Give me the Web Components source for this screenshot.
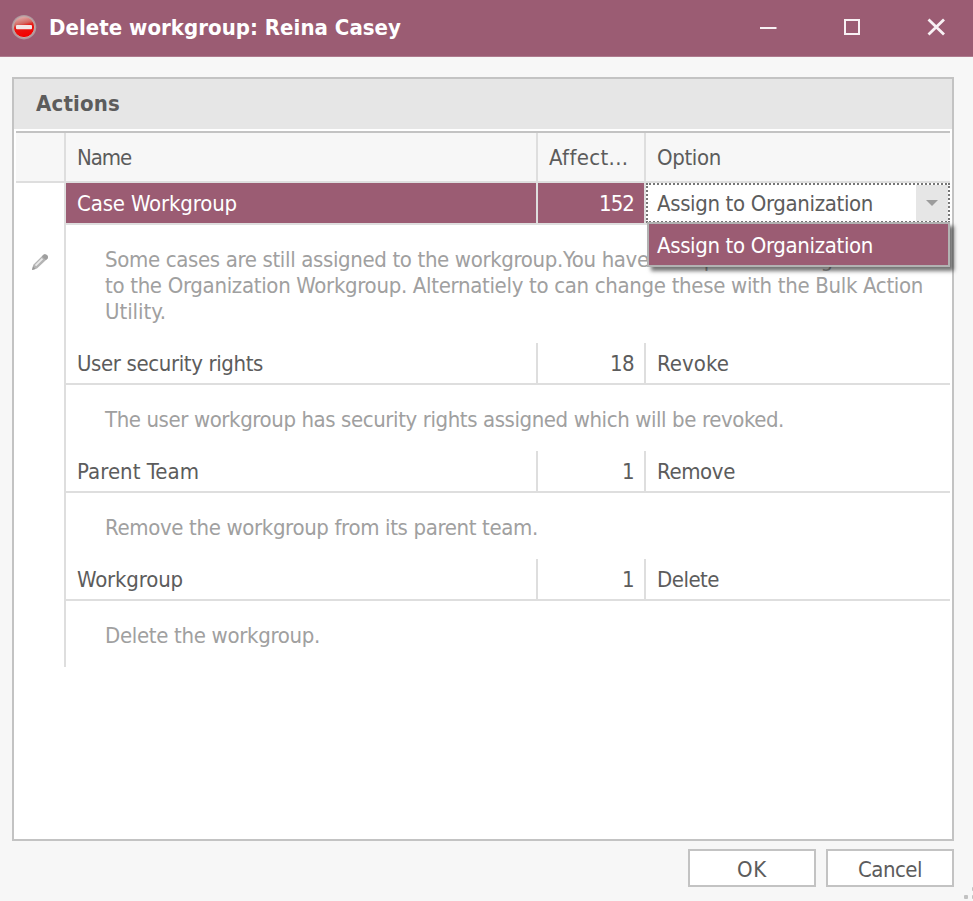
<!DOCTYPE html>
<html lang="en">
<head>
<meta charset="utf-8">
<title>Delete workgroup</title>
<style>
html, body { margin: 0; height: 100%; overflow: hidden; }
body { font: 22px/26px "DejaVu Sans Condensed", "DejaVu Sans", sans-serif; font-stretch: condensed; color: #5c5c5c; background: #f7f7f7; }
</style>
</head>
<body>
<dialog-window>
  <title-bar slot="title"><fit-text w="352">Delete workgroup: Reina Casey</fit-text></title-bar>
  <actions-panel>
    <fit-text slot="caption" w="84">Actions</fit-text>
    <grid-row head>
      <fit-text slot="name" w="54">Name</fit-text>
      <fit-text slot="count" w="80">Affect...</fit-text>
      <fit-text slot="option" w="64">Option</fit-text>
    </grid-row>
    <grid-row selected>
      <fit-text slot="name" w="160">Case Workgroup</fit-text>
      <fit-text slot="count" w="35">152</fit-text>
      <option-editor slot="option">
        <fit-text w="216">Assign to Organization</fit-text>
        <fit-text slot="item" w="216">Assign to Organization</fit-text>
      </option-editor>
    </grid-row>
    <row-note editing>
      <fit-text w="799">Some cases are still assigned to the workgroup.You have the option to assign these</fit-text>
      <fit-text w="818">to the Organization Workgroup. Alternatiely to can change these with the Bulk Action</fit-text>
      <fit-text w="61">Utility.</fit-text>
    </row-note>
    <grid-row>
      <fit-text slot="name" w="186">User security rights</fit-text>
      <fit-text slot="count" w="24">18</fit-text>
      <fit-text slot="option" w="72">Revoke</fit-text>
    </grid-row>
    <row-note><fit-text w="679">The user workgroup has security rights assigned which will be revoked.</fit-text></row-note>
    <grid-row>
      <fit-text slot="name" w="122">Parent Team</fit-text>
      <fit-text slot="count" w="12">1</fit-text>
      <fit-text slot="option" w="78">Remove</fit-text>
    </grid-row>
    <row-note><fit-text w="433">Remove the workgroup from its parent team.</fit-text></row-note>
    <grid-row>
      <fit-text slot="name" w="106">Workgroup</fit-text>
      <fit-text slot="count" w="12">1</fit-text>
      <fit-text slot="option" w="62">Delete</fit-text>
    </grid-row>
    <row-note><fit-text w="215">Delete the workgroup.</fit-text></row-note>
  </actions-panel>
  <push-button slot="footer"><fit-text w="30">OK</fit-text></push-button>
  <push-button slot="footer"><fit-text w="64">Cancel</fit-text></push-button>
</dialog-window>
<script>
function element(name, html, ready) {
  const template = document.createElement('template');
  template.innerHTML = html;
  customElements.define(name, class extends HTMLElement {
    constructor() {
      super();
      this.attachShadow({ mode: 'open' }).append(template.content.cloneNode(true));
    }
    connectedCallback() { if (ready) ready(this); }
  });
}

element('dialog-window', `
<style>
:host { display: flex; flex-direction: column; width: 973px; height: 901px; position: relative; overflow: hidden; background: #f7f7f7; }
main { padding: 20px 19px 0 12px; height: 764px; flex: none; display: flex; }
main ::slotted(*) { flex: 1; }
footer { display: flex; justify-content: flex-end; gap: 10px; padding: 8px 19px 0 0; }
svg { position: absolute; right: 0; bottom: 0; }
</style>
<slot name="title"></slot>
<main><slot></slot></main>
<footer><slot name="footer"></slot></footer>
<svg width="12" height="16" fill="#c2c2c2"><rect x="3" y="10" width="4" height="4" rx="1"/><rect x="11" y="10" width="4" height="4" rx="1"/><rect x="11" y="2" width="4" height="4" rx="1"/></svg>`);

element('title-bar', `
<style>
:host { display: flex; box-sizing: border-box; height: 57px; flex: none; background: #9b5c73; border-bottom: 1px solid #ae7b8e; color: #fff; font-weight: bold; align-items: center; padding-left: 11px; }
.stop { flex: none; margin-right: 12px; }
.label { flex: 1; padding-bottom: 1px; }
.ctl { flex: none; }
</style>
<svg class="stop" width="26" height="28" viewBox="0 0 26 28">
  <defs><linearGradient id="g" x1="0" y1="0" x2="0.25" y2="1"><stop offset="0" stop-color="#e6c4c4"/><stop offset=".42" stop-color="#d4655f"/><stop offset=".55" stop-color="#e51a14"/><stop offset="1" stop-color="#f40000"/></linearGradient></defs>
  <circle cx="13" cy="13.200" r="12.200" fill="#b09a9f"/>
  <circle cx="13" cy="13" r="10.600" fill="url(#g)" stroke="#c4a6a6" stroke-width="1"/>
  <rect x="5" y="11" width="16" height="4.200" rx="1" fill="#f4e6e6"/>
</svg>
<div class="label"><slot></slot></div>
<svg class="ctl" width="216" height="56" fill="none" stroke="#f8f1f4" stroke-width="2">
  <path d="M3 28H19.500"/><rect x="88" y="20" width="14" height="14"/><path stroke-width="2.800" d="M171.500 19.500L187 34.500M187 19.500L171.500 34.500"/>
</svg>`);

element('actions-panel', `
<style>
:host { display: flex; flex-direction: column; box-sizing: border-box; border: 2px solid #c3c3c3; background: #fff; }
.caption { height: 50px; box-sizing: border-box; flex: none; padding: 12px 0 0 22px; background: #e6e6e6; font-weight: bold; color: #5c5c5c; }
.grid { margin: 2px 2px 0 2px; border-top: 2px solid #c3c3c3; flex: 1; }
</style>
<div class="caption"><slot name="caption"></slot></div>
<div class="grid"><slot></slot></div>`);

element('grid-row', `
<style>
:host { display: grid; grid-template-columns: 48px 472px 108px 306px; height: 42px; }
:host([head]) { height: 50px; background: #f7f7f7; }
div { box-sizing: border-box; border-left: 2px solid #dedede; border-bottom: 2px solid #dedede; padding: 8px 11px 0; white-space: nowrap; min-width: 0; }
.mark { border-left: 0; border-bottom: 0; }
.count { text-align: right; padding-right: 10px; }
:host([head]) div { padding-top: 12px; }
:host([head]) .mark { border-bottom: 2px solid #dedede; }
:host([head]) .count { text-align: left; }
:host([selected]) .name, :host([selected]) .count { background: #9b5c73; color: #fff; }
:host([selected]) .option { padding: 0; background: #fff; }
</style>
<div class="mark"></div><div class="name"><slot name="name"></slot></div><div class="count"><slot name="count"></slot></div><div class="option"><slot name="option"></slot></div>`);

element('row-note', `
<style>
:host { display: grid; grid-template-columns: 48px 1fr; color: #a0a0a0; }
.text { border-left: 2px solid #dedede; padding: 22px 0 18px 39px; display: flex; flex-direction: column; }
.mark { display: flex; justify-content: center; padding-top: 27px; }
.mark svg { display: none; }
:host([editing]) svg { display: block; }
</style>
<div class="mark"><svg width="20" height="20" viewBox="0 0 20 20"><path d="M2 18L3.300 12.700L13.400 2.800C15.200 1 19.300 4 17.600 6.500L7 16.500Z" fill="#b4b4b4"/><path d="M5.500 13.700L12.500 6.700" stroke="#eaeaea" stroke-width="1.800"/><path d="M13.200 3C15.200 1 19.300 4 17.600 6.400L15.900 8L11.800 4.400Z" fill="#9f9f9f"/><path d="M2 18L3 14.200L5.600 16.900Z" fill="#999"/></svg></div>
<div class="text"><slot></slot></div>`);

element('option-editor', `
<style>
:host { display: block; position: relative; }
.field { display: flex; justify-content: space-between; box-sizing: border-box; width: 304px; height: 40px; border: 2px dotted #777; background: #fff; color: #5c5c5c; padding-left: 9px; }
.value { padding-top: 6px; }
.drop { width: 32px; background: #e6e6e6; display: flex; align-items: center; justify-content: center; }
.list { position: absolute; z-index: 5; left: 1px; top: 39px; box-sizing: border-box; width: 303px; height: 45px; border: 2px solid #b2b2b2; background: #9b5c73; color: #fff; padding: 9px 0 0 8px; box-shadow: 4px 4px 4px rgba(0,0,0,.55); }
</style>
<div class="field"><div class="value"><slot></slot></div><div class="drop"><svg width="12" height="6"><path d="M0 0H12L6 6Z" fill="#9c9c9c"/></svg></div></div>
<div class="list"><slot name="item"></slot></div>`);

element('push-button', `
<style>:host { display: flex; justify-content: center; box-sizing: border-box; width: 128px; height: 38px; border: 2px solid #c3c3c3; background: #fff; padding-top: 6px; }</style>
<slot></slot>`);

/* Single-line label whose tracking is adjusted so that it spans w pixels. */
element('fit-text', `
<style>:host { display: inline-block; white-space: nowrap; vertical-align: top; } span { display: inline-block; }</style>
<span><slot></slot></span>`, host => {
  const span = host.shadowRoot.querySelector('span');
  const extra = host.getAttribute('w') - span.getBoundingClientRect().width;
  span.style.letterSpacing = (extra / host.textContent.length).toFixed(3) + 'px';
});
</script>
</body>
</html>
